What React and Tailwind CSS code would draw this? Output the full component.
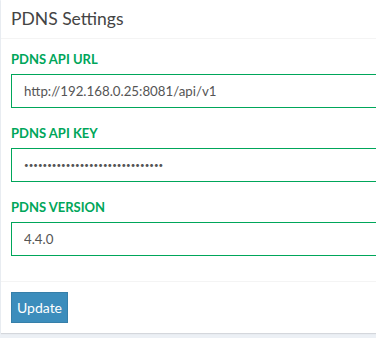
import React from 'react';

const font = { fontFamily: '"Source Sans Pro", Lato, "Noto Sans", sans-serif' };

const Field = ({ label, value, dots }) => (
  <div className="mb-[15px]">
    <label className="block mb-[5px] text-[13px] leading-[20px] font-bold text-[#00a65a]">{label}</label>
    <input
      type="text"
      readOnly
      value={value}
      className={`block w-full h-[34px] px-3 border border-[#00a65a] text-[#555] bg-white outline-none ${dots ? 'text-[8px]' : 'text-[13.3px]'}`}
      style={font}
    />
  </div>
);

export default function App() {
  return (
    <div className="w-[376px] h-[338px] overflow-hidden bg-[#ecf0f5] pl-px" style={font}>
      <div className="w-[520px] bg-white shadow-[0_1px_1px_rgba(0,0,0,0.1)]">
        {/* header */}
        <div className="p-[10px] border-b border-[#f4f4f4]">
          <h3 className="text-[17.5px] leading-[18px] text-[#444]">PDNS Settings</h3>
        </div>
        {/* body */}
        <div className="p-[10px]">
          <Field label="PDNS API URL" value="http://192.168.0.25:8081/api/v1" />
          <Field label="PDNS API KEY" dots value={'•'.repeat(30)} />
          <Field label="PDNS VERSION" value="4.4.0" />
        </div>
        {/* footer */}
        <div className="p-[10px] border-t border-[#f4f4f4]">
          <button className="h-[31px] px-[5px] bg-[#3c8dbc] border border-[#367fa9] text-white text-[14px]" style={font}>
            Update
          </button>
        </div>
      </div>
    </div>
  );
}
